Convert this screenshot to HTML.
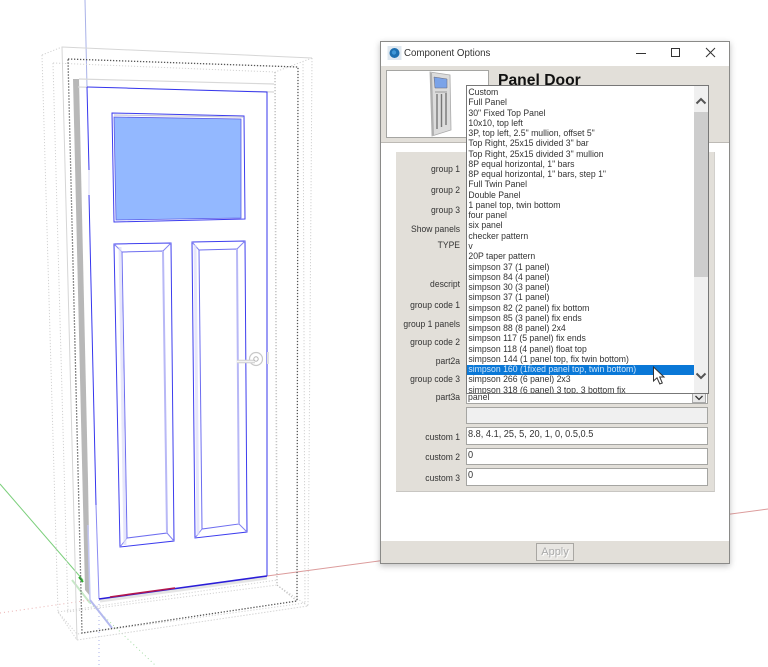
<!DOCTYPE html>
<html><head><meta charset="utf-8">
<style>
html,body{margin:0;padding:0;background:#fff;width:768px;height:667px;overflow:hidden}
*{box-sizing:border-box}
body{font-family:"Liberation Sans",sans-serif;position:relative}
.a{position:absolute}
#win{left:380px;top:41px;width:350px;height:523px;background:#fff;border:1px solid #8a8a88;box-shadow:0 2px 6px rgba(0,0,0,.25)}
.lab{position:absolute;left:0;width:460px;text-align:right;font-size:9.5px;line-height:12px;color:#333;filter:blur(.25px);transform:scaleX(.9);transform-origin:right center;margin-top:1px}
.fld{position:absolute;left:466px;width:242px;background:#fff;border:1px solid #a5a5a2;font-size:10px;line-height:12px;color:#333;padding-left:1px;padding-top:1px;filter:blur(.15px)}
.fld span{display:inline-block;transform:scaleX(.92);transform-origin:left center;white-space:nowrap}
#list{left:466px;top:85px;width:243px;height:309px;background:#fff;border:1px solid #777;overflow:hidden}
#items{position:absolute;left:0;top:2px;width:250px;font-size:9.5px;line-height:10.28px;color:#333;white-space:nowrap;filter:blur(.25px);transform:scaleX(.913);transform-origin:left top}
#items div{padding-left:1.5px;height:10.28px}
#items .sel{background:#0a78d7;color:#cfe6fa}
</style></head><body>
<svg class="a" style="left:0;top:0" width="768" height="667" viewBox="0 0 768 667" fill="none">
<defs><filter id="b"><feGaussianBlur stdDeviation=".35"/></filter></defs>
<g filter="url(#b)">
<path d="M85 0L87 87" stroke="#a9b2e8" stroke-width="1"/>
<path d="M0 484L83 580" stroke="#7ccf7c" stroke-width="1"/>
<path d="M79 577L83 582" stroke="#2faa2f" stroke-width="2"/>
<path d="M72 580L90 603" stroke="#c6e8c6" stroke-width="2"/>
<path d="M90 603L155 665" stroke="#a6dca6" stroke-dasharray="1 3"/>
<path d="M0 613L90 600" stroke="#eab0b0" stroke-dasharray="1 3"/>
<path d="M267 576L768 509" stroke="#dc9c9c" stroke-width="1"/>
<path d="M99 600V667" stroke="#a9b2e8" stroke-dasharray="1 3"/>
<path d="M90 600L112 628" stroke="#b4b9ee" stroke-width="2"/>
<!-- outer grey bounds -->
<path d="M62 47L312 58M62 47L77 640" stroke="#d6d6d6" stroke-width="1"/>
<path d="M77 640L308 606" stroke="#d6d6d6" stroke-width="1" stroke-dasharray="1.5 1.5"/>
<path d="M42 55L62 47M312 58L275 72M42 55L58 612L77 640M53 63L275 72M53 63L68 612M312 58L308 606M303 61L305 603M58 612L77 634L305 603M277 585L308 606M67 612L277 585M58 612L277 580" stroke="#d2d2d2" stroke-width="1" stroke-dasharray="1.2 1.8"/>
<path d="M275 72L277 585" stroke="#c6c6c6" stroke-width="1.600" stroke-dasharray="1.2 1.8"/>
<path d="M68 59L298 67L297 601L82 633Z" stroke="#555" stroke-width="1.3" stroke-dasharray="1.3 1.7"/>
<path d="M277 585L297 601" stroke="#bbb" stroke-dasharray="1.3 1.7"/>
<!-- frame -->
<path d="M73 79L79 79L88 480L90 596L85 590Z" fill="#b8b8b8"/>
<path d="M79 79L274 84M78 87L274 92" stroke="#d8d8d8" stroke-width="1.2"/>
<path d="M87 87L267 92L267 576L99 599Z" fill="#fff"/>
<path d="M100 601L267 578" stroke="#e5e5e5" stroke-width="3"/>
<path d="M88 525L90 600" stroke="#c3c6f4" stroke-width="1.5"/>
<path d="M87 87L267 92L267 576" stroke="#3636ee" stroke-width="1"/>
<path d="M87 87L89 170M89 195L96 505" stroke="#3636ee" stroke-width="1"/>
<path d="M89 170L89 195" stroke="#d8d8f4" stroke-width="1"/>
<path d="M96 505L99 599" stroke="#8a8af2" stroke-width="1"/>
<path d="M99 599L267 576" stroke="#2a1fd8" stroke-width="1.6"/>
<path d="M110 597L175 588" stroke="#b3144c" stroke-width="1.6"/>
<!-- glass -->
<path d="M112 113L244 116L245 219L114 222Z" fill="#fff" stroke="#3d3dee" stroke-width="1"/>
<path d="M114 117L241 119L241 218L116 220Z" fill="#93b8ff" stroke="#5a5ae8" stroke-width=".8"/>
<path d="M114 115L243 117" stroke="#c8c8d8" stroke-width="1.2"/>
<!-- panels -->
<g stroke="#3d3dee" stroke-width="1">
<path d="M114 244L171 243L174 541L120 547Z"/>
<path d="M122 252L163 251L167 533L127 538Z" stroke="#6d6df0"/>
<path d="M114 244L122 252M171 243L163 251M174 541L167 533M120 547L127 538" stroke="#8484f2"/>
<path d="M192 242L245 241L247 532L195 538Z"/>
<path d="M199 250L237 249L239 524L202 529Z" stroke="#6d6df0"/>
<path d="M192 242L199 250M245 241L237 249M247 532L239 524M195 538L202 529" stroke="#8484f2"/>
</g>
<path d="M163 251L167 533M237 249L239 524" stroke="#b8b8f6" stroke-width="2"/>
<path d="M120 247L125 545M195 245L198 535" stroke="#dcdcfa" stroke-width="3" opacity=".7"/>
<path d="M268 352V364" stroke="#e0e0e0" stroke-width="2"/>
<circle cx="256" cy="359" r="6.5" fill="#fff" stroke="#c8c8c8" stroke-width="1.2"/>
<path d="M237 361.500H255" stroke="#cfcfcf" stroke-width="3.500"/>
<path d="M237 361.500H255" stroke="#f4f4f4" stroke-width="1.500"/>
<circle cx="256" cy="359" r="2.200" fill="#fff" stroke="#b5b5b5"/>
</g>
</svg>

<div class="a" id="win"></div>
<!-- title bar -->
<svg class="a" style="left:387px;top:46px" width="15" height="14" viewBox="0 0 15 14"><rect width="14" height="14" x=".5" fill="#dfe8f0"/><circle cx="7.500" cy="7" r="5" fill="#1d6fb0"/><circle cx="7" cy="6.500" r="2.200" fill="#3f97d8"/></svg>
<div class="a" style="left:404px;top:47px;font-size:10.5px;line-height:13px;color:#333;white-space:nowrap;filter:blur(.2px);transform:scaleX(.925);transform-origin:left center">Component Options</div>
<div class="a" style="left:636px;top:53px;width:10px;height:1px;background:#333"></div>
<div class="a" style="left:671px;top:48px;width:9px;height:9px;border:1px solid #333"></div>
<svg class="a" style="left:705px;top:47px" width="12" height="12" viewBox="0 0 12 12"><path d="M1 1L10 10M10 1L1 10" stroke="#333" stroke-width="1" fill="none"/></svg>
<!-- header -->
<div class="a" style="left:381px;top:66px;width:348px;height:77px;background:#e2dfd9;border-bottom:1px solid #bdbab5"></div>
<div class="a" style="left:386px;top:70px;width:103px;height:68px;background:#fff;border:1px solid #a5a5a2"></div>
<svg class="a" style="left:428px;top:70px" width="28" height="68" viewBox="0 0 28 68" fill="none">
<path d="M2 2L22 5L23 60L4 66Z" fill="#dcdcdc" stroke="#aaa" stroke-width=".8"/>
<path d="M3 3L5 65" stroke="#b0b0b0" stroke-width="2"/>
<path d="M6 7L19 9L19 18L7 18Z" fill="#7ba3e8" stroke="#667" stroke-width=".5"/>
<path d="M7 22L19 22" stroke="#8a8a8a" stroke-width=".8"/>
<path d="M9 24V59M13.500 24V57M18 23V55" stroke="#777" stroke-width="1.400"/>
</svg>
<div class="a" style="left:498px;top:72px;font-size:16px;line-height:18px;font-weight:bold;color:#111;white-space:nowrap;transform:scaleX(.98);transform-origin:left center">Panel Door</div>
<!-- form panel -->
<div class="a" style="left:396px;top:152px;width:319px;height:340px;background:#e2dfd9;border-right:1px solid #d2d0cc;border-bottom:1px solid #c8c6c2"></div>
<div class="lab" style="top:163px">group 1</div>
<div class="lab" style="top:184px">group 2</div>
<div class="lab" style="top:204px">group 3</div>
<div class="lab" style="top:223px">Show panels</div>
<div class="lab" style="top:239px">TYPE</div>
<div class="lab" style="top:278px">descript</div>
<div class="lab" style="top:299px">group code 1</div>
<div class="lab" style="top:318px">group 1 panels</div>
<div class="lab" style="top:336px">group code 2</div>
<div class="lab" style="top:355px">part2a</div>
<div class="lab" style="top:373px">group code 3</div>
<div class="lab" style="top:391px">part3a</div>
<div class="lab" style="top:431px">custom 1</div>
<div class="lab" style="top:451px">custom 2</div>
<div class="lab" style="top:472px">custom 3</div>
<!-- fields -->
<div class="fld" style="top:393px;height:11px;line-height:9px;font-size:9.500px;border-top:0;overflow:hidden;padding-top:0"><span>panel</span></div>
<div class="a" style="left:692px;top:393px;width:14px;height:10px;background:#e8e8e8;border:1px solid #aaa"></div>
<svg class="a" style="left:694px;top:394px" width="10" height="8" viewBox="0 0 10 8"><path d="M1.500 2L5 5.500L8.500 2" stroke="#333" stroke-width="1.300" fill="none"/></svg>
<div class="fld" style="top:407px;height:17px;background:#f0f0f0"></div>
<div class="fld" style="top:427px;height:18px"><span>8.8, 4.1, 25, 5, 20, 1, 0, 0.5,0.5</span></div>
<div class="fld" style="top:448px;height:17px"><span>0</span></div>
<div class="fld" style="top:468px;height:18px"><span>0</span></div>
<!-- list popup -->
<div class="a" id="list">
<div id="items">
<div>Custom</div><div>Full Panel</div><div>30" Fixed Top Panel</div><div>10x10, top left</div><div>3P, top left, 2.5" mullion, offset 5"</div><div>Top Right, 25x15 divided 3" bar</div><div>Top Right, 25x15 divided 3" mullion</div><div>8P equal horizontal, 1" bars</div><div>8P equal horizontal, 1" bars, step 1"</div><div>Full Twin Panel</div><div>Double Panel</div><div>1 panel top, twin bottom</div><div>four panel</div><div>six panel</div><div>checker pattern</div><div>v</div><div>20P taper pattern</div><div>simpson 37 (1 panel)</div><div>simpson 84 (4 panel)</div><div>simpson 30 (3 panel)</div><div>simpson 37 (1 panel)</div><div>simpson 82 (2 panel) fix bottom</div><div>simpson 85 (3 panel) fix ends</div><div>simpson 88 (8 panel) 2x4</div><div>simpson 117 (5 panel) fix ends</div><div>simpson 118 (4 panel) float top</div><div>simpson 144 (1 panel top, fix twin bottom)</div><div class="sel">simpson 160 (1fixed panel top, twin bottom)</div><div>simpson 266 (6 panel) 2x3</div><div>simpson 318 (6 panel) 3 top, 3 bottom fix</div>
</div>
<div class="a" style="left:227px;top:0;width:14px;height:307px;background:#f0f0f0"></div>
<div class="a" style="left:227px;top:26px;width:14px;height:165px;background:#cdcdcd"></div>
<svg class="a" style="left:227px;top:10px" width="14" height="10" viewBox="0 0 14 10"><path d="M2.500 7.500L7 3L11.500 7.500" stroke="#555" stroke-width="2" fill="none"/></svg>
<svg class="a" style="left:227px;top:285px" width="14" height="10" viewBox="0 0 14 10"><path d="M2.500 2.500L7 7L11.500 2.500" stroke="#555" stroke-width="2" fill="none"/></svg>
</div>
<!-- cursor -->
<svg class="a" style="left:652px;top:366px" width="14" height="20" viewBox="0 0 14 20"><path d="M1.500 1V15L5 11.800L7.800 18L10.300 17L7.700 11H12Z" fill="#fff" stroke="#333" stroke-width="1"/></svg>
<!-- footer -->
<div class="a" style="left:381px;top:541px;width:348px;height:22px;background:#e2dfd9"></div>
<div class="a" style="left:536px;top:543px;width:38px;height:18px;background:#e8e6e2;border:1px solid #a9a7a3;font-size:11px;line-height:16px;text-align:center;color:#aaa;text-shadow:1px 1px 0 #fff">Apply</div>
</body></html>
